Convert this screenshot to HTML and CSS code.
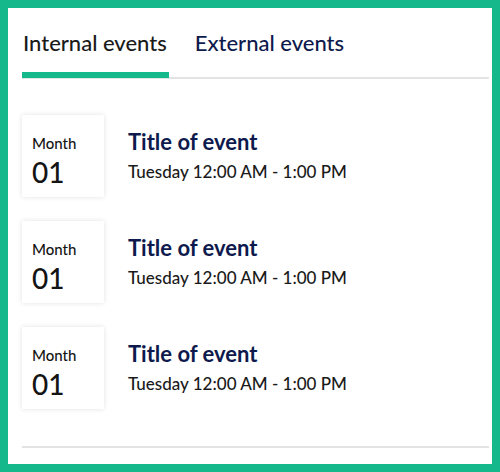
FILE: index.html
```html
<!DOCTYPE html>
<html lang="en">
<head>
<meta charset="utf-8">
<title>Events</title>
<link rel="stylesheet" href="styles.css">
</head>
<body>
<div class="frame">
  <div class="tabs">
    <div class="tab active">Internal events</div>
    <div class="tab">External events</div>
  </div>
  <ul class="events">
    <li class="event">
      <div class="date"><span class="month">Month</span><span class="day">01</span></div>
      <div class="info"><div class="title">Title of event</div><div class="time">Tuesday 12:00 AM - 1:00 PM</div></div>
    </li>
    <li class="event">
      <div class="date"><span class="month">Month</span><span class="day">01</span></div>
      <div class="info"><div class="title">Title of event</div><div class="time">Tuesday 12:00 AM - 1:00 PM</div></div>
    </li>
    <li class="event">
      <div class="date"><span class="month">Month</span><span class="day">01</span></div>
      <div class="info"><div class="title">Title of event</div><div class="time">Tuesday 12:00 AM - 1:00 PM</div></div>
    </li>
  </ul>
  <div class="divider"></div>
</div>
</body>
</html>
```
FILE: styles.css
```css
* { box-sizing: border-box; }
html, body { margin: 0; padding: 0; }
body {
  width: 500px;
  height: 472px;
  font-family: Lato, "Noto Sans", sans-serif;
  background: #14b88a;
}
.frame {
  width: 500px;
  height: 472px;
  border: 8px solid #14b88a;
  background: #ffffff;
  padding: 22px 3px 0 14px;
}
.tabs {
  display: flex;
  gap: 25px;
  border-bottom: 2px solid #e3e3e3;
}
.tab {
  font-size: 22px;
  line-height: 26px;
  font-weight: 500;
  padding: 0 2px 16px 1px;
  margin-bottom: -1px;
  border-bottom: 6px solid transparent;
  color: #0e1a4d;
}
.tab.active {
  color: #1a1a1a;
  border-bottom-color: #14b88a;
}
.events {
  list-style: none;
  margin: 36px 0 0 0;
  padding: 0;
  display: flex;
  flex-direction: column;
  gap: 24px;
}
.event {
  display: flex;
  align-items: flex-start;
  gap: 24px;
}
.date {
  width: 82px;
  height: 82px;
  flex: none;
  background: #ffffff;
  box-shadow: 0 0 5px rgba(0, 0, 0, 0.12);
  padding: 19px 0 0 10px;
  display: flex;
  flex-direction: column;
  color: #141414;
}
.month {
  font-size: 15px;
  line-height: 18px;
  font-weight: 500;
}
.day {
  font-size: 28px;
  line-height: 32px;
  font-weight: 500;
  margin-top: 4px;
}
.info {
  padding-top: 14px;
}
.title {
  font-size: 22px;
  line-height: 26px;
  font-weight: 700;
  color: #0e1a4d;
}
.time {
  font-size: 17px;
  line-height: 20px;
  font-weight: 500;
  margin-top: 7px;
  color: #1a1a1a;
}
.divider {
  margin-top: 37px;
  height: 2px;
  background: #e3e3e3;
}
```
